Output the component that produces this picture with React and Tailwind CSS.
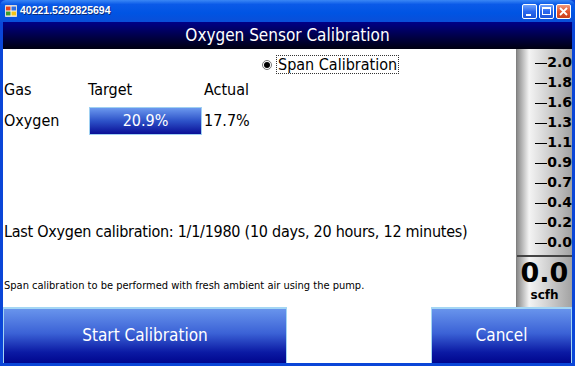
import React from 'react';

const ticks = ['2.0', '1.8', '1.6', '1.3', '1.1', '0.9', '0.7', '0.4', '0.2', '0.0'];

const FormIcon = () => (
  <svg width="12" height="12" viewBox="0 0 12 12">
    <rect x="0" y="0" width="12" height="12" fill="#f4f4f4" stroke="#8a8a8a" strokeWidth="0.5" />
    <rect x="1" y="1.5" width="4.5" height="4" fill="#e5431f" />
    <rect x="6.5" y="1.5" width="4.5" height="4" fill="#2f6fe0" />
    <rect x="1" y="6.5" width="4.5" height="4" fill="#3b9a2c" />
    <rect x="6.5" y="6.5" width="4.5" height="4" fill="#f2c417" />
  </svg>
);

const CaptionButton = ({ kind }) => {
  const isClose = kind === 'close';
  return (
    <div
      className={`w-[15px] h-[15px] rounded-[2px] border border-white flex items-center justify-center ${
        isClose
          ? 'bg-[linear-gradient(to_bottom,#f09a7e,#e2552e_50%,#c8401c)]'
          : 'bg-[linear-gradient(to_bottom,#6fa2fb,#2a68ee_50%,#1d55d8)]'
      }`}
    >
      {kind === 'min' && <div className="w-[5px] h-[2px] bg-white mt-[7px] -ml-[3px]" />}
      {kind === 'max' && <div className="w-[9px] h-[8px] border border-white border-t-2" />}
      {isClose && (
        <svg width="9" height="9" viewBox="0 0 9 9">
          <path d="M1 1 L8 8 M8 1 L1 8" stroke="white" strokeWidth="1.8" />
        </svg>
      )}
    </div>
  );
};

const App = () => {
  return (
    <div
      className="w-[575px] h-[366px] flex flex-col overflow-hidden bg-[#0a46d8]"
      style={{ fontFamily: '"DejaVu Sans Condensed", "Liberation Sans", Arial, sans-serif' }}
    >
      {/* Title bar */}
      <div className="h-[22px] flex items-center px-[5px] bg-[linear-gradient(to_bottom,#3a87f5_0%,#0a5ae8_20%,#0054e3_60%,#0a4ed8_100%)] rounded-t-[6px]">
        <FormIcon />
        <span
          className="ml-[3px] text-white text-[10.5px] font-bold"
          style={{ fontFamily: '"Liberation Sans", Arial, sans-serif', textShadow: '1px 1px 0 #0a2a7a' }}
        >
          40221.5292825694
        </span>
        <div className="ml-auto flex gap-[2px] mr-[-1px]">
          <CaptionButton kind="min" />
          <CaptionButton kind="max" />
          <CaptionButton kind="close" />
        </div>
      </div>

      {/* Client area */}
      <div className="flex-1 flex flex-col mx-[3px] bg-white">
        {/* Header */}
        <div className="h-[27px] flex items-center justify-center bg-[linear-gradient(to_bottom,#000088,#000040_60%,#000010)]">
          <span className="text-white text-[17px]">Oxygen Sensor Calibration</span>
        </div>

        <div className="flex h-[258px]">
          {/* Main content */}
          <div className="flex-1 flex flex-col text-black">
            <div className="mt-[6px] h-[19px] flex items-center pl-[259px]">
              <span className="w-[10px] h-[10px] rounded-full border border-[#777] bg-white flex items-center justify-center">
                <span className="w-[6px] h-[6px] rounded-full bg-black" />
              </span>
              <span className="ml-[4px] h-[19px] px-[1px] border border-dotted border-[#333] text-[16px] leading-[17px]">
                Span Calibration
              </span>
            </div>

            <div className="mt-[6px] h-[20px] flex items-center text-[16px]">
              <span className="w-[85px] pl-[1px]">Gas</span>
              <span className="w-[116px]">Target</span>
              <span>Actual</span>
            </div>

            <div className="mt-[7px] h-[28px] flex items-center text-[16px]">
              <span className="w-[86px] pl-[1px]">Oxygen</span>
              <div className="w-[113px] h-[28px] flex items-center justify-center text-white border border-[#9fd0f2] bg-[linear-gradient(to_bottom,#6b98ee,#2d52c8_50%,#0a0e96)]">
                20.9%
              </div>
              <span className="ml-[2px]">17.7%</span>
            </div>

            <div className="mt-[87px] h-[20px] flex items-center pl-[1px] text-[16px] tracking-[-0.26px]">
              Last Oxygen calibration: 1/1/1980 (10 days, 20 hours, 12 minutes)
            </div>

            <div className="mt-[37px] h-[14px] flex items-center pl-[1px] text-[11px]">
              Span calibration to be performed with fresh ambient air using the pump.
            </div>
          </div>

          {/* Flow gauge */}
          <div
            className="w-[56px] flex flex-col overflow-hidden border-l border-[#808080] bg-[linear-gradient(to_right,#8a8a8a_0%,#f4f4f4_22%,#d2d2d2_55%,#a2a2a2_100%)]"
            style={{ fontFamily: '"DejaVu Sans", "Liberation Sans", sans-serif' }}
          >
            <div className="pt-[3px] flex flex-col">
              {ticks.map((t, i) => (
                <div key={i} className="h-[20px] flex items-center">
                  <div className="ml-[18px] w-[15px] h-px bg-black mt-[2px]" />
                  <span className="text-[14px] font-bold leading-none whitespace-nowrap">{t}</span>
                </div>
              ))}
            </div>
            <div className="mt-[3px] h-[2px] bg-[#444]" />
            <div className="flex flex-col items-center">
              <span className="text-[27px] font-bold leading-[30px] mt-[1px]">0.0</span>
              <span className="text-[12px] font-bold leading-[14px]">scfh</span>
            </div>
          </div>
        </div>

        {/* Buttons */}
        <div className="flex-1 flex justify-between">
          <button className="w-[284px] h-full border-t-2 border-x border-[#a4d6f4] bg-[linear-gradient(to_bottom,#6894ec,#3b62d6_45%,#0b1aa4_80%,#00068e)] text-white text-[17px]">
            Start Calibration
          </button>
          <button className="w-[141px] h-full border-t-2 border-x border-[#a4d6f4] bg-[linear-gradient(to_bottom,#6894ec,#3b62d6_45%,#0b1aa4_80%,#00068e)] text-white text-[17px]">
            Cancel
          </button>
        </div>
      </div>
      <div className="h-[3px]" />
    </div>
  );
};

export default App;
